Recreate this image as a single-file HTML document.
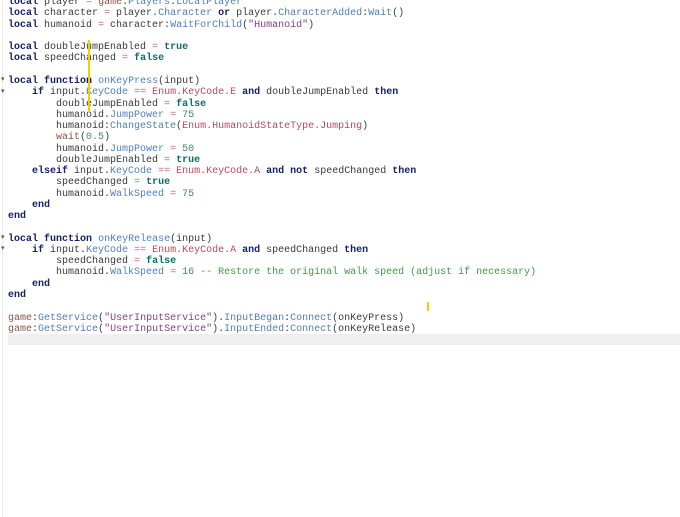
<!DOCTYPE html>
<html><head><meta charset="utf-8"><style>
html,body{margin:0;padding:0;background:#fff;width:680px;height:517px;overflow:hidden;position:relative}
pre{position:absolute;left:8px;top:-2.9px;margin:0;font:10px/11.27px "Liberation Mono",monospace;color:#3a3a3a;white-space:pre}
.k{color:#16216a;font-weight:bold}
.b{color:#0f6a6a;font-weight:bold}
.p{color:#4f7fbd}
.e{color:#b84a5a}
.s{color:#8a3f80}
.n{color:#3f8a6a}
.o{color:#c06a80}
.g{color:#8a5648}
.c{color:#3f9a4a}
.hl{position:absolute;left:8px;top:334px;width:672px;height:11px;background:#efefef}
.gut{position:absolute;left:2px;top:0;width:1px;height:517px;background:#ececec}
.y1{position:absolute;left:88px;top:40px;width:2px;height:72px;background:#f2d000}
.y2{position:absolute;left:427px;top:302px;width:2px;height:9px;background:#f2d000}
.f{position:absolute;left:1px;font:7px "DejaVu Sans",sans-serif;color:#555}
</style></head><body>
<div class="gut"></div>
<div class="hl"></div>
<div class="f" style="top:75px">▾</div>
<div class="f" style="top:87px">▾</div>
<div class="f" style="top:233px">▾</div>
<div class="f" style="top:244px">▾</div>
<pre><span class="k">local</span> player <span class="o">=</span> <span class="g">game</span>.<span class="p">Players</span>.<span class="p">LocalPlayer</span>
<span class="k">local</span> character <span class="o">=</span> player.<span class="p">Character</span> <span class="k">or</span> player.<span class="p">CharacterAdded</span>:<span class="p">Wait</span>()
<span class="k">local</span> humanoid <span class="o">=</span> character:<span class="p">WaitForChild</span>(<span class="s">"Humanoid"</span>)

<span class="k">local</span> doubleJumpEnabled <span class="o">=</span> <span class="b">true</span>
<span class="k">local</span> speedChanged <span class="o">=</span> <span class="b">false</span>

<span class="k">local</span> <span class="k">function</span> <span class="p">onKeyPress</span>(input)
    <span class="k">if</span> input.<span class="p">KeyCode</span> <span class="o">==</span> <span class="e">Enum.KeyCode.E</span> <span class="k">and</span> doubleJumpEnabled <span class="k">then</span>
        doubleJumpEnabled <span class="o">=</span> <span class="b">false</span>
        humanoid.<span class="p">JumpPower</span> <span class="o">=</span> <span class="n">75</span>
        humanoid:<span class="p">ChangeState</span>(<span class="e">Enum.HumanoidStateType.Jumping</span>)
        <span class="g">wait</span>(<span class="n">0.5</span>)
        humanoid.<span class="p">JumpPower</span> <span class="o">=</span> <span class="n">50</span>
        doubleJumpEnabled <span class="o">=</span> <span class="b">true</span>
    <span class="k">elseif</span> input.<span class="p">KeyCode</span> <span class="o">==</span> <span class="e">Enum.KeyCode.A</span> <span class="k">and</span> <span class="k">not</span> speedChanged <span class="k">then</span>
        speedChanged <span class="o">=</span> <span class="b">true</span>
        humanoid.<span class="p">WalkSpeed</span> <span class="o">=</span> <span class="n">75</span>
    <span class="k">end</span>
<span class="k">end</span>

<span class="k">local</span> <span class="k">function</span> <span class="p">onKeyRelease</span>(input)
    <span class="k">if</span> input.<span class="p">KeyCode</span> <span class="o">==</span> <span class="e">Enum.KeyCode.A</span> <span class="k">and</span> speedChanged <span class="k">then</span>
        speedChanged <span class="o">=</span> <span class="b">false</span>
        humanoid.<span class="p">WalkSpeed</span> <span class="o">=</span> <span class="n">16</span> <span class="c">-- Restore the original walk speed (adjust if necessary)</span>
    <span class="k">end</span>
<span class="k">end</span>

<span class="g">game</span>:<span class="p">GetService</span>(<span class="s">"UserInputService"</span>).<span class="p">InputBegan</span>:<span class="p">Connect</span>(onKeyPress)
<span class="g">game</span>:<span class="p">GetService</span>(<span class="s">"UserInputService"</span>).<span class="p">InputEnded</span>:<span class="p">Connect</span>(onKeyRelease)
</pre>
<div class="y1"></div>
<div class="y2"></div>
</body></html>
